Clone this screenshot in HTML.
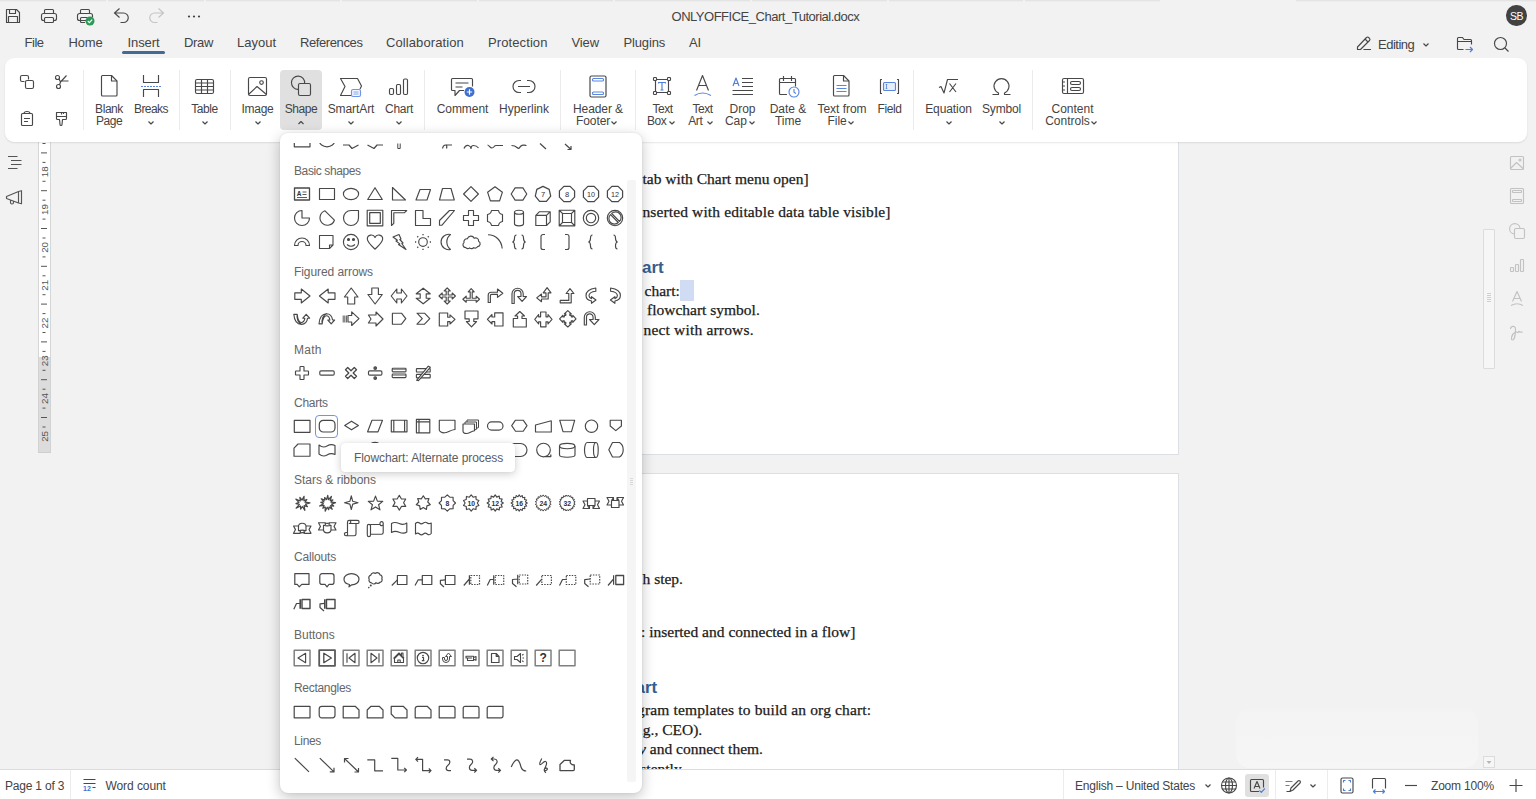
<!DOCTYPE html>
<html><head><meta charset="utf-8">
<title>ONLYOFFICE</title>
<style>
*{box-sizing:border-box;margin:0;padding:0}
html,body{width:1536px;height:799px;overflow:hidden;background:#f2f2f2;font-family:"Liberation Sans",sans-serif;color:#444;}
.abs{position:absolute}
svg{position:absolute;overflow:visible}
.ic{fill:none;stroke:#484848;stroke-width:1.15;stroke-linejoin:round;stroke-linecap:butt}
.t{position:absolute;white-space:nowrap;line-height:1}
.tab{position:absolute;top:36px;font-size:13px;line-height:14px;color:#444;white-space:nowrap;letter-spacing:-0.15px}
.lbl{position:absolute;font-size:12px;line-height:12px;color:#444;text-align:center;white-space:nowrap;letter-spacing:-0.45px;transform:translateX(-50%)}
.sep{position:absolute;top:70px;width:1px;height:60px;background:#ebebeb}
.doc{position:absolute;margin-top:0.9px;font-family:"Liberation Serif",serif;font-size:15.5px;color:#1a1a1a;white-space:nowrap;line-height:20px;-webkit-text-stroke:0.25px #1a1a1a}
.h2{position:absolute;margin-top:2.2px;font-family:"Liberation Sans",sans-serif;font-weight:bold;font-size:17px;color:#365f91;white-space:nowrap;line-height:20px}
.sec{position:absolute;left:294px;font-size:12px;line-height:14px;color:#666;white-space:nowrap;letter-spacing:-0.15px}
.sb{position:absolute;font-size:12px;line-height:14px;color:#444;white-space:nowrap;letter-spacing:-0.2px}
</style></head><body>
<!-- left sidebar icons -->
<svg style="left:5px;top:152px" width="20" height="20" viewBox="0 0 20 20"><g class="ic"><path d="M3 4.5h9.5M6 8.5h10.5M6 12.5h10.5M3 16.5h9.5" stroke="#555"/></g></svg>
<svg style="left:4px;top:187px" width="20" height="20" viewBox="0 0 20 20"><g class="ic" style="stroke:#555"><path d="M2.5 9.5L14.5 4.5v11.5l-12-4.5zM14.5 4.5l3-.8v13l-3-.7M6.5 13v2.5a1.5 1.5 0 0 0 3 0v-1.3"/></g></svg>

<!-- vertical ruler -->
<div class="abs" style="left:38px;top:142px;width:13px;height:311px;background:#fff;border-left:1px solid #d6d6d6;border-right:1px solid #d6d6d6"></div>
<div class="abs" style="left:38px;top:357px;width:13px;height:96px;background:#dcdcdc;border-left:1px solid #d2d2d2;border-right:1px solid #d2d2d2;border-bottom:1px solid #cfcfcf"></div>
<svg style="left:38px;top:142px" width="14" height="311" viewBox="0 0 14 311">
<g stroke="#555" stroke-width="1" fill="none">
<path d="M3 10.9h6M3 48.7h6M3 86.5h6M3 124.3h6M3 162.1h6M3 199.9h6M3 237.7h6M3 275.5h6"/>
<path d="M4.5 1.5h3M4.5 20.4h3M4.5 39.3h3M4.5 58.2h3M4.5 77.1h3M4.5 96h3M4.5 114.9h3M4.5 133.8h3M4.5 152.7h3M4.5 171.6h3M4.5 190.5h3M4.5 209.4h3M4.5 228.3h3M4.5 247.2h3M4.5 266.1h3M4.5 285h3"/>
</g>
<g font-family="Liberation Sans, sans-serif" font-size="9.8" fill="#555" text-anchor="middle">
<text transform="translate(9.9 29.8) rotate(-90)">18</text>
<text transform="translate(9.9 67.6) rotate(-90)">19</text>
<text transform="translate(9.9 105.4) rotate(-90)">20</text>
<text transform="translate(9.9 143.2) rotate(-90)">21</text>
<text transform="translate(9.9 181) rotate(-90)">22</text>
<text transform="translate(9.9 218.8) rotate(-90)">23</text>
<text transform="translate(9.9 256.6) rotate(-90)">24</text>
<text transform="translate(9.9 294.4) rotate(-90)">25</text>
</g></svg>

<!-- page 1 -->
<div class="abs" style="left:362px;top:100px;width:817px;height:355px;background:#fff;border:1px solid #dcdfe3"></div>
<!-- page 2 -->
<div class="abs" style="left:362px;top:473px;width:817px;height:330px;background:#fff;border:1px solid #dcdfe3"></div>

<div class="doc" style="left:642.5px;top:168px">tab with Chart menu open]</div>
<div class="doc" style="left:642.5px;top:201px;letter-spacing:0.12px">nserted with editable data table visible]</div>
<div class="h2" style="left:642px;top:256px">art</div>
<div class="abs" style="left:680px;top:280px;width:14px;height:20.5px;background:#d0dcf3"></div>
<div class="doc" style="left:644.5px;top:280px">chart:</div>
<div class="doc" style="left:647px;top:299px">flowchart symbol.</div>
<div class="doc" style="left:643.5px;top:318.7px;letter-spacing:0.18px">nect with arrows.</div>

<div class="doc" style="left:642.5px;top:567.7px">h step.</div>
<div class="doc" style="left:641px;top:621.3px">: inserted and connected in a flow]</div>
<div class="h2" style="left:635.5px;top:675.5px">art</div>
<div class="doc" style="left:637px;top:699.3px;letter-spacing:0.15px">gram templates to build an org chart:</div>
<div class="doc" style="left:632px;top:719px">e.g., CEO).</div>
<div class="doc" style="left:639px;top:738.3px"><i>y</i> and connect them.</div>
<div class="doc" style="left:636px;top:758px">istently.</div>

<!-- right sidebar icons (disabled) -->
<svg style="left:1507px;top:153px" width="20" height="20" viewBox="0 0 20 20"><g class="ic" style="stroke:#c2c2c2"><rect x="3.5" y="3.5" width="13" height="13" rx="1"/><circle cx="13" cy="7" r="1"/><path d="M3.5 15.5l6-6 7 6.5"/></g></svg>
<svg style="left:1507px;top:186px" width="20" height="20" viewBox="0 0 20 20"><g class="ic" style="stroke:#c2c2c2"><rect x="3.5" y="2.5" width="13" height="15" rx="1"/><rect x="5.5" y="4.5" width="9" height="2" rx=".5"/><rect x="5.5" y="13.5" width="9" height="2" rx=".5"/></g></svg>
<svg style="left:1507px;top:221px" width="20" height="20" viewBox="0 0 20 20"><g class="ic" style="stroke:#c2c2c2"><path d="M7.5 13A5.2 5.2 0 1 1 13 7.5"/><rect x="7.5" y="7.5" width="10" height="10" rx="1.5"/></g></svg>
<svg style="left:1507px;top:255px" width="20" height="20" viewBox="0 0 20 20"><g class="ic" style="stroke:#c2c2c2"><rect x="3.5" y="12.5" width="3" height="4" rx=".8"/><rect x="8.5" y="9.5" width="3" height="7" rx=".8"/><rect x="13.5" y="4.5" width="3" height="12" rx=".8"/></g></svg>
<svg style="left:1507px;top:288px" width="20" height="20" viewBox="0 0 20 20"><g class="ic" style="stroke:#c2c2c2"><path d="M5.5 13.5L10 3.5l4.5 10M7 10.5h6M4 17.5q6-3.5 12 0"/></g></svg>
<svg style="left:1507px;top:322px" width="20" height="20" viewBox="0 0 20 20"><g class="ic" style="stroke:#c2c2c2"><path d="M3.5 7c0-3 5-4 5 0 0 5-1 11-3 11s-1-6 3-8c2-1 2 2 3 0s1 1 2 0 1 1 2 0"/></g></svg>

<!-- vertical scrollbar -->
<div class="abs" style="left:1483px;top:229px;width:12px;height:140px;background:#f6f6f6;border:1px solid #dcdcdc;border-radius:1px"></div>
<div class="abs" style="left:1487px;top:293px;width:4px;height:1px;background:#cfcfcf;box-shadow:0 2px 0 #cfcfcf,0 4px 0 #cfcfcf,0 6px 0 #cfcfcf,0 8px 0 #cfcfcf"></div>
<div class="abs" style="left:1483px;top:756px;width:12px;height:12px;background:#f6f6f6;border:1px solid #dcdcdc"></div>
<svg style="left:1483px;top:756px" width="12" height="12" viewBox="0 0 12 12"><path d="M3.5 5h5L6 8z" fill="#b5b5b5"/></svg>

<!-- ghost toast --><div class="abs" style="left:1236px;top:708px;width:242px;height:60px;border-radius:14px;background:linear-gradient(rgba(255,255,255,.10),rgba(255,255,255,.30))"></div>
<!-- status bar -->
<div class="abs" style="left:0;top:769px;width:1536px;height:30px;background:#fff;border-top:1px solid #dcdcdc"></div>
<div class="sb" style="left:5px;top:778.7px">Page 1 of 3</div>
<div class="abs" style="left:70px;top:770px;width:1px;height:29px;background:#ececec"></div>
<svg style="left:80px;top:775px" width="20" height="20" viewBox="0 0 20 20"><g class="ic"><path d="M3.5 4.5h12M3.5 8.5h12M12.5 12.5h3"/></g><text x="3" y="16" font-family="Liberation Sans, sans-serif" font-size="7" fill="#3f6fd1" font-weight="bold">12</text></svg>
<div class="sb" style="left:105.5px;top:778.7px;letter-spacing:-0.08px">Word count</div>

<div class="abs" style="left:1063px;top:770px;width:1px;height:29px;background:#ececec"></div>
<div class="sb" style="left:1075px;top:779px">English – United States</div>
<svg style="left:1203px;top:781px" width="10" height="10" viewBox="0 0 10 10"><path class="ic" d="M2.5 3.5L5 6l2.5-2.5"/></svg>
<svg style="left:1219px;top:775px" width="20" height="20" viewBox="0 0 20 20"><g class="ic"><circle cx="10" cy="10.5" r="7.5"/><ellipse cx="10" cy="10.5" rx="3.5" ry="7.5"/><path d="M2.5 10.5h15M3.5 7h13M3.5 14h13M10 3v15"/></g></svg>
<div class="abs" style="left:1245px;top:774px;width:24px;height:23px;border-radius:3px;background:#e0e0e0"></div>
<svg style="left:1247px;top:775px" width="20" height="20" viewBox="0 0 20 20"><g class="ic"><path d="M12 16.5H4.5a1 1 0 0 1-1-1V5.5a1 1 0 0 1 1-1h11a1 1 0 0 1 1 1v7"/><path d="M7 13.5l3-7 3 7M8 11.5h4"/><path d="M12.5 15.5l1.8 1.8 3.5-3.8" stroke="#4f7fd6"/></g></svg>
<div class="abs" style="left:1275px;top:770px;width:1px;height:29px;background:#ececec"></div>
<svg style="left:1283px;top:775px" width="20" height="20" viewBox="0 0 20 20"><g class="ic"><path d="M2.5 6.5h7M2.5 10.5h4" stroke="#4f7fd6"/><path d="M7 16.5l1-3.5 7-7a1.4 1.4 0 0 1 2 2l-7 7zM3.5 16.5h3.5"/></g></svg>
<svg style="left:1308px;top:781px" width="10" height="10" viewBox="0 0 10 10"><path class="ic" d="M2.5 3.5L5 6l2.5-2.5"/></svg>
<div class="abs" style="left:1327px;top:770px;width:1px;height:29px;background:#ececec"></div>
<svg style="left:1337px;top:775px" width="20" height="20" viewBox="0 0 20 20"><g class="ic"><rect x="4" y="3" width="12" height="15" rx="1.5"/><path d="M6.5 7.5v-2h2M13.5 7.5v-2h-2M6.5 13.5v2h2M13.5 13.5v2h-2" stroke="#4f7fd6"/></g></svg>
<svg style="left:1369px;top:775px" width="20" height="20" viewBox="0 0 20 20"><g class="ic"><path d="M3.5 13.5v-9a1 1 0 0 1 1-1h11a1 1 0 0 1 1 1v9"/><path d="M4.5 16.5h11M6.5 14.5l-2 2 2 2M13.5 14.5l2 2-2 2" stroke="#4f7fd6"/></g></svg>
<svg style="left:1401px;top:775px" width="20" height="20" viewBox="0 0 20 20"><path class="ic" d="M4 10.5h12"/></svg>
<div class="sb" style="left:1431px;top:779px">Zoom 100%</div>
<svg style="left:1506px;top:775px" width="20" height="20" viewBox="0 0 20 20"><path class="ic" d="M3.5 10.5h13M10 4v13"/></svg>
<!-- top faint line -->
<div class="abs" style="left:0;top:0;width:1536px;height:1px;background:#e4e4e4"></div>
<div class="abs" style="left:0;top:1px;width:1536px;height:1px;background:#ededed"></div>
<div class="abs" style="left:106px;top:0;width:2px;height:2px;background:#f2f2f2"></div>
<div class="abs" style="left:204px;top:0;width:2px;height:2px;background:#f2f2f2"></div>
<div class="abs" style="left:340px;top:0;width:2px;height:2px;background:#f2f2f2"></div>
<div class="abs" style="left:477px;top:0;width:2px;height:2px;background:#f2f2f2"></div>
<div class="abs" style="left:613px;top:0;width:2px;height:2px;background:#f2f2f2"></div>
<div class="abs" style="left:750px;top:0;width:2px;height:2px;background:#f2f2f2"></div>
<div class="abs" style="left:887px;top:0;width:2px;height:2px;background:#f2f2f2"></div>
<div class="abs" style="left:1023px;top:0;width:2px;height:2px;background:#f2f2f2"></div>
<div class="abs" style="left:1160px;top:0;width:136px;height:2px;background:#f2f2f2"></div>

<!-- quick access icons -->
<svg style="left:3px;top:6px" width="20" height="20" viewBox="0 0 20 20"><g class="ic"><path d="M3.5 3.5h10l3 3v10h-13z" stroke-linejoin="round"/><path d="M6.5 3.5v4h6v-4M5.5 16.5v-6h9v6"/></g></svg>
<svg style="left:39px;top:6px" width="20" height="20" viewBox="0 0 20 20"><g class="ic"><path d="M5.5 7.5v-3a1 1 0 0 1 1-1h7a1 1 0 0 1 1 1v3"/><rect x="2.5" y="7.5" width="15" height="7" rx="2"/><rect x="5.5" y="11.5" width="9" height="5" rx="1" fill="#f2f2f2"/></g></svg>
<svg style="left:75px;top:6px" width="20" height="20" viewBox="0 0 20 20"><g class="ic"><path d="M5.5 7.5v-3a1 1 0 0 1 1-1h7a1 1 0 0 1 1 1v3"/><path d="M11 14.5H4.5a2 2 0 0 1-2-2v-3a2 2 0 0 1 2-2h11a2 2 0 0 1 2 2v2"/><path d="M10 16.5H6.5a1 1 0 0 1-1-1v-3a1 1 0 0 1 1-1h6"/></g><circle cx="15" cy="15" r="4.5" fill="#2a9a55"/><path d="M12.8 15l1.6 1.6 2.8-2.9" fill="none" stroke="#fff" stroke-width="1.2"/></svg>
<svg style="left:111px;top:6px" width="20" height="20" viewBox="0 0 20 20"><g class="ic"><path d="M8.5 2.5l-5 4.5 5 4.5M4 7h8.5a4.5 4.5 0 0 1 0 9.5H9.5" stroke-linejoin="miter"/></g></svg>
<svg style="left:147px;top:6px" width="20" height="20" viewBox="0 0 20 20"><g class="ic" style="stroke:#c4c4c4"><path d="M11.5 2.5l5 4.5-5 4.5M16 7H7.5a4.5 4.5 0 0 0 0 9.5h3" stroke-linejoin="miter"/></g></svg>
<svg style="left:184px;top:6px" width="20" height="20" viewBox="0 0 20 20"><g fill="#444"><circle cx="5" cy="10.5" r="1.1"/><circle cx="10" cy="10.5" r="1.1"/><circle cx="15" cy="10.5" r="1.1"/></g></svg>

<!-- title -->
<div class="t" style="left:671.5px;top:9px;font-size:13px;line-height:15px;color:#444;letter-spacing:-0.48px">ONLYOFFICE_Chart_Tutorial.docx</div>
<!-- avatar -->
<div class="abs" style="left:1506.2px;top:5.3px;width:20.4px;height:20.4px;border-radius:50%;background:#424242"></div>
<div class="t" style="left:1506px;top:10.5px;width:21px;text-align:center;font-size:10.5px;color:#fff;letter-spacing:-0.6px">SB</div>

<!-- tabs -->
<div class="tab" style="left:24.5px;letter-spacing:-0.45px">File</div>
<div class="tab" style="left:68.5px;letter-spacing:-0.15px">Home</div>
<div class="tab" style="left:127.5px;letter-spacing:-0.1px">Insert</div>
<div class="abs" style="left:122px;top:51px;width:43px;height:3px;border-radius:1.5px;background:#446995"></div>
<div class="tab" style="left:184px;letter-spacing:-0.35px">Draw</div>
<div class="tab" style="left:237px;letter-spacing:0px">Layout</div>
<div class="tab" style="left:300px;letter-spacing:-0.4px">References</div>
<div class="tab" style="left:386px;letter-spacing:0.1px">Collaboration</div>
<div class="tab" style="left:488px;letter-spacing:0.1px">Protection</div>
<div class="tab" style="left:571.5px;letter-spacing:-0.1px">View</div>
<div class="tab" style="left:623.5px;letter-spacing:-0.15px">Plugins</div>
<div class="tab" style="left:689px;letter-spacing:-0.15px">AI</div>

<!-- editing -->
<svg style="left:1354px;top:33px" width="20" height="20" viewBox="0 0 20 20"><g class="ic"><path d="M3.5 14L12.5 4.5a1.5 1.5 0 0 1 2.1 0l.9.9a1.5 1.5 0 0 1 0 2.1L6.5 16.5H3.5z"/><path d="M11 6l3 3M9.5 16.5h7.5"/></g></svg>
<div class="tab" style="left:1378px;top:38px;letter-spacing:-0.5px">Editing</div>
<svg style="left:1421px;top:40px" width="10" height="10" viewBox="0 0 10 10"><path class="ic" d="M2.5 3.5L5 6l2.5-2.5"/></svg>
<svg style="left:1455px;top:34px" width="20" height="20" viewBox="0 0 20 20"><g class="ic"><path d="M2.5 14.5v-10a1 1 0 0 1 1-1h4l1.5 2h6.5a1 1 0 0 1 1 1v4M2.5 7.5h14M2.5 14.5a1 1 0 0 0 1 1h5"/><path d="M10.5 15.5h7M15 13l2.5 2.5-2.5 2.5" stroke="#4f7fd6"/></g></svg>
<svg style="left:1491px;top:34px" width="20" height="20" viewBox="0 0 20 20"><g class="ic"><circle cx="9.5" cy="9.5" r="6"/><path d="M14 14l3.5 3.5"/></g></svg>
<!-- ribbon panel -->
<div class="abs" style="left:5px;top:58px;width:1522px;height:84px;background:#fff;border-radius:9px;box-shadow:0 1px 2px rgba(0,0,0,.10)"></div>
<!-- small icons -->
<svg style="left:17px;top:72px" width="20" height="20" viewBox="0 0 20 20"><g class="ic"><path d="M7.5 9.5H5a1.5 1.5 0 0 1-1.5-1.5V5A1.5 1.5 0 0 1 5 3.5h5A1.5 1.5 0 0 1 11.5 5v2.5"/><rect x="8.5" y="8.5" width="8" height="8" rx="1.5"/></g></svg>
<svg style="left:51px;top:72px" width="20" height="20" viewBox="0 0 20 20"><g class="ic"><circle cx="6.5" cy="5.5" r="2"/><circle cx="7.5" cy="14.5" r="2"/><path d="M8 7l1.5 3 6-6.5M9.5 10l-1 3M10.5 9h7"/></g></svg>
<svg style="left:17px;top:108.5px" width="20" height="20" viewBox="0 0 20 20"><g class="ic"><path d="M7 4.5H5.5a1 1 0 0 0-1 1v10a1 1 0 0 0 1 1h9a1 1 0 0 0 1-1v-10a1 1 0 0 0-1-1H13"/><path d="M7 4.5c0-1 1-2 3-2s3 1 3 2zM7 9.5h6M7 12.5h4"/></g></svg>
<svg style="left:51px;top:108.5px" width="20" height="20" viewBox="0 0 20 20"><g class="ic"><path d="M5.5 3.5h10v6a1 1 0 0 1-1 1h-3l-.5 5a1 1 0 0 1-2 0l-.5-5h-2a1 1 0 0 1-1-1z"/><path d="M5.5 7.5h10M10.5 3.5v2M12.5 3.5v1.5"/></g></svg>
<div class="sep" style="left:83px"></div>

<!-- Blank page -->
<svg style="left:97px;top:72px" width="24" height="28" viewBox="0 0 24 28"><g class="ic"><path d="M5.5 3.5h9l5.5 5.5v14a1 1 0 0 1-1 1h-13.5a1 1 0 0 1-1-1v-18.5a1 1 0 0 1 1-1z"/><path d="M14.5 3.5v5.5h5.5"/></g></svg>
<div class="lbl" style="left:109px;top:103px;letter-spacing:-0.45px">Blank<br>Page</div>
<!-- Breaks -->
<svg style="left:139px;top:72px" width="24" height="28" viewBox="0 0 24 28"><g class="ic"><path d="M4.5 3v7.5h15V3M4.5 25v-7.5h15V25"/><path d="M2 14.5h20" stroke="#5b86e0" stroke-dasharray="2 1"/></g></svg>
<div class="lbl" style="left:151px;top:103px;letter-spacing:-0.55px">Breaks</div>
<svg style="left:146px;top:118.3px" width="10" height="10" viewBox="0 0 10 10"><path class="ic" d="M2.5 3.5L5 6l2.5-2.5"/></svg>
<div class="sep" style="left:179px"></div>
<!-- Table -->
<svg style="left:192px;top:72px" width="24" height="28" viewBox="0 0 24 28"><g class="ic"><rect x="3.5" y="7.5" width="18" height="14" rx="1.5"/><path d="M3.5 11h18M3.5 14.5h18M3.5 18h18M9.5 7.5v14M15.5 7.5v14"/></g></svg>
<div class="lbl" style="left:204.5px;top:103px;letter-spacing:-0.45px">Table</div>
<svg style="left:199.5px;top:118.3px" width="10" height="10" viewBox="0 0 10 10"><path class="ic" d="M2.5 3.5L5 6l2.5-2.5"/></svg>
<div class="sep" style="left:230px"></div>
<!-- Image -->
<svg style="left:245px;top:72px" width="24" height="28" viewBox="0 0 24 28"><g class="ic"><rect x="3.5" y="5.5" width="18" height="18" rx="1.5"/><circle cx="16.5" cy="10.5" r="1.8"/><path d="M3.5 22.5l8.5-8 9.5 8"/></g></svg>
<div class="lbl" style="left:257.5px;top:103px;letter-spacing:-0.25px">Image</div>
<svg style="left:252.5px;top:118.3px" width="10" height="10" viewBox="0 0 10 10"><path class="ic" d="M2.5 3.5L5 6l2.5-2.5"/></svg>
<!-- Shape (pressed) -->
<div class="abs" style="left:280px;top:70px;width:42px;height:60px;border-radius:4px;background:#e0e0e0"></div>
<svg style="left:289px;top:72px" width="24" height="28" viewBox="0 0 24 28"><g class="ic"><path d="M9.5 17.3A6.6 6.6 0 1 1 15.6 11.5"/><rect x="9.5" y="11.5" width="12" height="12" rx="1.5"/></g></svg>
<div class="lbl" style="left:301px;top:103px;letter-spacing:-0.48px">Shape</div>
<svg style="left:296px;top:118.3px" width="10" height="10" viewBox="0 0 10 10"><path class="ic" d="M2.5 6L5 3.5 7.5 6"/></svg>
<!-- SmartArt -->
<svg style="left:338px;top:72px" width="26" height="28" viewBox="0 0 26 28"><g class="ic"><path d="M14 23.5H2.5L7 14.5 2.5 6.5h17l4 7.5-1.5 3"/><rect x="13.5" y="17.5" width="9" height="7" rx="1.5" stroke="#6f95e6" fill="#f1f5fe"/><path d="M15.5 20h5M15.5 22h5" stroke="#6f95e6" stroke-width=".8"/></g></svg>
<div class="lbl" style="left:351px;top:103px;letter-spacing:-0.08px">SmartArt</div>
<svg style="left:345.5px;top:118.3px" width="10" height="10" viewBox="0 0 10 10"><path class="ic" d="M2.5 3.5L5 6l2.5-2.5"/></svg>
<!-- Chart -->
<svg style="left:386px;top:72px" width="24" height="28" viewBox="0 0 24 28"><g class="ic"><rect x="3.5" y="16.5" width="4" height="6" rx="1.2"/><rect x="10.5" y="12.5" width="4" height="10" rx="1.2"/><rect x="17.5" y="7" width="4" height="15.5" rx="1.2"/></g></svg>
<div class="lbl" style="left:399px;top:103px;letter-spacing:-0.3px">Chart</div>
<svg style="left:393.5px;top:118.3px" width="10" height="10" viewBox="0 0 10 10"><path class="ic" d="M2.5 3.5L5 6l2.5-2.5"/></svg>
<div class="sep" style="left:424px"></div>
<!-- Comment -->
<svg style="left:449px;top:72px" width="28" height="28" viewBox="0 0 28 28"><g class="ic"><path d="M15 18.5H10.5l-4.5 5v-5H3.5a1 1 0 0 1-1-1V7.5a1 1 0 0 1 1-1h19a1 1 0 0 1 1 1v7"/><path d="M6.5 11h13M6.5 15h7"/></g><circle cx="20.5" cy="20" r="5" fill="#3f6fd1"/><path d="M17.8 20h5.4M20.5 17.3v5.4" stroke="#fff" stroke-width="1.2" fill="none"/></svg>
<div class="lbl" style="left:462.5px;top:103px;letter-spacing:-0.04px">Comment</div>
<!-- Hyperlink -->
<svg style="left:511px;top:72px" width="26" height="28" viewBox="0 0 26 28"><g class="ic"><path d="M10 8.5H8a6 6 0 0 0 0 12h2M16 8.5h2a6 6 0 0 1 0 12h-2M7 14.5h12"/></g></svg>
<div class="lbl" style="left:524px;top:103px;letter-spacing:0px">Hyperlink</div>
<div class="sep" style="left:560px"></div>
<!-- Header & Footer -->
<svg style="left:586px;top:72px" width="24" height="28" viewBox="0 0 24 28"><g class="ic"><rect x="4" y="4" width="16" height="21" rx="1.5" stroke-width="1.2"/><rect x="6.5" y="6.5" width="11" height="2.5" rx="1" stroke="#5b86e0"/><rect x="6.5" y="20" width="11" height="2.5" rx="1" stroke="#5b86e0"/></g></svg>
<div class="lbl" style="left:598px;top:103px;letter-spacing:-0.08px">Header &amp;<br>Footer&nbsp;&nbsp;&nbsp;</div>
<svg style="left:609px;top:117.5px" width="10" height="10" viewBox="0 0 10 10"><path class="ic" d="M2.5 3.5L5 6l2.5-2.5"/></svg>
<div class="sep" style="left:635px"></div>
<!-- Text Box -->
<svg style="left:650px;top:72px" width="24" height="28" viewBox="0 0 24 28"><g class="ic"><rect x="5.5" y="7.5" width="13" height="13"/><rect x="3.5" y="5.5" width="3" height="3" rx=".8" fill="#fff"/><rect x="17.5" y="5.5" width="3" height="3" rx=".8" fill="#fff"/><rect x="3.5" y="19.5" width="3" height="3" rx=".8" fill="#fff"/><rect x="17.5" y="19.5" width="3" height="3" rx=".8" fill="#fff"/><path d="M8.5 11.5v-1h7v1M12 10.5v7.5M10.5 18h3" stroke="#4f7fd6"/></g></svg>
<div class="lbl" style="left:662.5px;top:103px;letter-spacing:-0.45px">Text<br>Box&nbsp;&nbsp;&nbsp;&nbsp;</div>
<svg style="left:667px;top:117.5px" width="10" height="10" viewBox="0 0 10 10"><path class="ic" d="M2.5 3.5L5 6l2.5-2.5"/></svg>
<!-- Text Art -->
<svg style="left:690px;top:72px" width="24" height="28" viewBox="0 0 24 28"><g class="ic"><path d="M6.5 18.5L12.5 3.5l6 15M8.5 13.5h8"/><path d="M4.5 23.5q8-5 16.5 0" stroke="#5b86e0"/></g></svg>
<div class="lbl" style="left:702.5px;top:103px;letter-spacing:-0.45px">Text<br>Art&nbsp;&nbsp;&nbsp;&nbsp;&nbsp;</div>
<svg style="left:705px;top:117.5px" width="10" height="10" viewBox="0 0 10 10"><path class="ic" d="M2.5 3.5L5 6l2.5-2.5"/></svg>
<!-- Drop Cap -->
<svg style="left:730px;top:72px" width="26" height="28" viewBox="0 0 26 28"><g class="ic"><path d="M3 14l3-8 3 8M4 11.5h4" stroke="#4f7fd6"/><path d="M12 6.5h11M12 10.5h11M12 14.5h11M2.5 18.5h20.5M2.5 22.5h20.5"/></g></svg>
<div class="lbl" style="left:742.5px;top:103px;letter-spacing:-0.05px">Drop<br>Cap&nbsp;&nbsp;&nbsp;&nbsp;</div>
<svg style="left:747px;top:117.5px" width="10" height="10" viewBox="0 0 10 10"><path class="ic" d="M2.5 3.5L5 6l2.5-2.5"/></svg>
<!-- Date & Time -->
<svg style="left:776px;top:72px" width="26" height="28" viewBox="0 0 26 28"><g class="ic"><path d="M11 22.5H4.5a1 1 0 0 1-1-1V7.5a1 1 0 0 1 1-1h14a1 1 0 0 1 1 1v7M3.5 10.5h16M7.5 4v5M15.5 4v5"/><circle cx="18" cy="20" r="5" stroke="#5b86e0"/><path d="M18 17v3.2l2 1.3" stroke="#5b86e0"/></g></svg>
<div class="lbl" style="left:788px;top:103px;letter-spacing:0px">Date &amp;<br>Time</div>
<!-- Text from file -->
<svg style="left:830px;top:72px" width="24" height="28" viewBox="0 0 24 28"><g class="ic"><path d="M4.5 3.5h9l5.5 5.5v14a1 1 0 0 1-1 1h-13.5a1 1 0 0 1-1-1v-18.5a1 1 0 0 1 1-1z"/><path d="M13.5 3.5v5.5h5.5"/><path d="M6.5 13.5h10M6.5 16.5h10M6.5 19.5h10" stroke="#5b86e0"/></g></svg>
<div class="lbl" style="left:842px;top:103px;letter-spacing:-0.04px">Text from<br>File&nbsp;&nbsp;&nbsp;</div>
<svg style="left:846px;top:117.5px" width="10" height="10" viewBox="0 0 10 10"><path class="ic" d="M2.5 3.5L5 6l2.5-2.5"/></svg>
<!-- Field -->
<svg style="left:877px;top:72px" width="26" height="28" viewBox="0 0 26 28"><g class="ic"><path d="M5 7.5H3.5v14H5M20 7.5h1.5v14H20"/><rect x="6.5" y="10.5" width="12" height="8" rx="1" stroke="#5b86e0" fill="#e6edfb"/><path d="M9.5 12.5v4M8.7 12.5h1.6M8.7 16.5h1.6" stroke="#4f7fd6" stroke-width=".8"/></g></svg>
<div class="lbl" style="left:889.5px;top:103px;letter-spacing:-0.4px">Field</div>
<div class="sep" style="left:913px"></div>
<!-- Equation -->
<svg style="left:936px;top:72px" width="26" height="28" viewBox="0 0 26 28"><g class="ic"><path d="M3 15.5l2-1 3 6.5 3.5-13.5h10.5M13.5 11.5l6.5 8.5M20 11.5l-6.5 8.5"/></g></svg>
<div class="lbl" style="left:948.5px;top:103px;letter-spacing:-0.1px">Equation</div>
<svg style="left:943.5px;top:118.3px" width="10" height="10" viewBox="0 0 10 10"><path class="ic" d="M2.5 3.5L5 6l2.5-2.5"/></svg>
<!-- Symbol -->
<svg style="left:989px;top:72px" width="26" height="28" viewBox="0 0 26 28"><g class="ic"><path d="M3.5 22.5h6v-1.5a7.5 7.5 0 1 1 6 0v1.5h6"/></g></svg>
<div class="lbl" style="left:1001.5px;top:103px;letter-spacing:-0.17px">Symbol</div>
<svg style="left:996.5px;top:118.3px" width="10" height="10" viewBox="0 0 10 10"><path class="ic" d="M2.5 3.5L5 6l2.5-2.5"/></svg>
<div class="sep" style="left:1032px"></div>
<!-- Content controls -->
<svg style="left:1059px;top:72px" width="28" height="28" viewBox="0 0 28 28"><g class="ic"><rect x="3.5" y="6.5" width="21" height="15" rx="1.5"/><path d="M8.5 6.5v15M3.5 10h2.5M3.5 14h2.5M3.5 18h2.5"/><rect x="11.5" y="9.5" width="10" height="3" rx="1.5"/><rect x="11.5" y="15.5" width="10" height="3" rx="1.5"/></g></svg>
<div class="lbl" style="left:1072.5px;top:103px;letter-spacing:0px">Content<br>Controls&nbsp;&nbsp;&nbsp;</div>
<svg style="left:1089px;top:117.5px" width="10" height="10" viewBox="0 0 10 10"><path class="ic" d="M2.5 3.5L5 6l2.5-2.5"/></svg>
<!-- dropdown panel -->
<div class="abs" style="left:280px;top:133px;width:362px;height:659.5px;background:#fff;border-radius:8px;box-shadow:0 4px 14px rgba(0,0,0,.24),0 0 2px rgba(0,0,0,.10)"></div>
<div class="abs" style="left:627px;top:180px;width:9px;height:602px;background:#f5f5f5;border-radius:2px"></div>
<div class="abs" style="left:630px;top:478px;width:3px;height:1px;background:#d8d8d8;box-shadow:0 2px 0 #d8d8d8,0 4px 0 #d8d8d8,0 6px 0 #d8d8d8"></div>
<div class="sec" style="top:164px;letter-spacing:-0.4px">Basic shapes</div>
<div class="sec" style="top:265px;letter-spacing:-0.07px">Figured arrows</div>
<div class="sec" style="top:343px;letter-spacing:0.27px">Math</div>
<div class="sec" style="top:396px;letter-spacing:-0.25px">Charts</div>
<div class="sec" style="top:473px;letter-spacing:0px">Stars &amp; ribbons</div>
<div class="sec" style="top:550px;letter-spacing:-0.15px">Callouts</div>
<div class="sec" style="top:628px;letter-spacing:0px">Buttons</div>
<div class="sec" style="top:681px;letter-spacing:-0.3px">Rectangles</div>
<div class="sec" style="top:734px;letter-spacing:-0.35px">Lines</div>
<!-- selected item -->
<div class="abs" style="left:315px;top:415px;width:23px;height:23px;border:1px solid #6e96e6;border-radius:4px"></div>
<div class="abs" style="left:285px;top:143px;width:340px;height:7px;overflow:hidden"><svg class="si" style="left:7.45px;top:-12px" width="20" height="20" viewBox="0 0 20 20"><g class="ic"><path d="M2.3 4.3H18V15.8H2.3z" stroke-width="1.2"/></g></svg>
<svg class="si" style="left:31.52px;top:-12px" width="20" height="20" viewBox="0 0 20 20"><g class="ic"><ellipse cx="10" cy="10" rx="7.6" ry="5.8" stroke-width="1.2"/></g></svg>
<svg class="si" style="left:55.59px;top:-12px" width="20" height="20" viewBox="0 0 20 20"><g class="ic"><path d="M2 14H8L11 17.5 17.5 14" stroke-width="1.2"/></g></svg>
<svg class="si" style="left:79.66px;top:-12px" width="20" height="20" viewBox="0 0 20 20"><g class="ic"><path d="M18 14H12L9 17.5 2.5 14" stroke-width="1.2"/></g></svg>
<svg class="si" style="left:103.73px;top:-12px" width="20" height="20" viewBox="0 0 20 20"><g class="ic"><path d="M8.8 12.5V17.5H11.2V12.5" stroke-width="1"/></g></svg>
<svg class="si" style="left:151.87px;top:-12px" width="20" height="20" viewBox="0 0 20 20"><g class="ic"><path d="M5.5 17.5C6 15 7 14 8.5 14S10 15.5 9.5 17.5M9 14H15" stroke-width="1.2"/></g></svg>
<svg class="si" style="left:175.94px;top:-12px" width="20" height="20" viewBox="0 0 20 20"><g class="ic"><path d="M3 17.5C4 15 6 14 7.5 14.5S10 16 10 17.5C10 16 11 14.5 12.5 14.5S16 15 17.5 17" stroke-width="1.2"/></g></svg>
<svg class="si" style="left:200.01px;top:-12px" width="20" height="20" viewBox="0 0 20 20"><g class="ic"><path d="M2.5 14C4 14 5 17 7 17S9 14.5 11 14.5H18" stroke-width="1.2"/></g></svg>
<svg class="si" style="left:224.08px;top:-12px" width="20" height="20" viewBox="0 0 20 20"><g class="ic"><path d="M2.5 14.5C4 14.5 6 14.5 8 16.5S10 17 12 15 15 14.5 17.5 14.5" stroke-width="1.2"/></g></svg>
<svg class="si" style="left:248.15px;top:-12px" width="20" height="20" viewBox="0 0 20 20"><g class="ic"><path d="M7 12.5L13 18" stroke-width="1.2"/></g></svg>
<svg class="si" style="left:272.22px;top:-12px" width="20" height="20" viewBox="0 0 20 20"><g class="ic"><path d="M8 13L14 18.5M10.5 18.5H14V15" stroke-width="1.2"/></g></svg>
</div><svg class="si" style="left:292.45px;top:184px" width="20" height="20" viewBox="0 0 20 20"><g class="ic"><path d="M2.5 4h15v12h-15z" stroke-width="1.3"/><text x="7" y="12.2" font-family="Liberation Sans, sans-serif" font-size="6.5" font-weight="bold" text-anchor="middle" fill="#303030" stroke="none">A</text><path d="M10.5 8h4M10.5 10.5h4M5 13.5h10" stroke-width="0.9"/></g></svg>
<svg class="si" style="left:316.52px;top:184px" width="20" height="20" viewBox="0 0 20 20"><g class="ic"><path d="M2.5 4.5h15v11h-15z" /></g></svg>
<svg class="si" style="left:340.59px;top:184px" width="20" height="20" viewBox="0 0 20 20"><g class="ic"><ellipse cx="10" cy="10" rx="7.6" ry="5.6"/></g></svg>
<svg class="si" style="left:364.66px;top:184px" width="20" height="20" viewBox="0 0 20 20"><g class="ic"><path d="M10 3.7L17.3 15.5H2.7z" /></g></svg>
<svg class="si" style="left:388.73px;top:184px" width="20" height="20" viewBox="0 0 20 20"><g class="ic"><path d="M3.5 3.5v12.5H16.5z" /></g></svg>
<svg class="si" style="left:412.8px;top:184px" width="20" height="20" viewBox="0 0 20 20"><g class="ic"><path d="M7 5.5h10.5L14 16H3z" /></g></svg>
<svg class="si" style="left:436.87px;top:184px" width="20" height="20" viewBox="0 0 20 20"><g class="ic"><path d="M5.5 4.5h8.5L17.3 16H2.5z" /></g></svg>
<svg class="si" style="left:460.94px;top:184px" width="20" height="20" viewBox="0 0 20 20"><g class="ic"><path d="M10 2.6L17.4 10 10 17.4 2.6 10z" /></g></svg>
<svg class="si" style="left:485.01px;top:184px" width="20" height="20" viewBox="0 0 20 20"><g class="ic"><path d="M10 2.8L17.42 8.19L14.58 16.91L5.42 16.91L2.58 8.19z" /></g></svg>
<svg class="si" style="left:509.08px;top:184px" width="20" height="20" viewBox="0 0 20 20"><g class="ic"><path d="M17.8 10L13.9 16.15L6.1 16.15L2.2 10L6.1 3.85L13.9 3.85z" /></g></svg>
<svg class="si" style="left:533.15px;top:184px" width="20" height="20" viewBox="0 0 20 20"><g class="ic"><path d="M10 2.4L16.18 5.37L17.7 12.06L13.43 17.42L6.57 17.42L2.3 12.06L3.82 5.37z" stroke-width="1.25"/><text x="10" y="12.9" font-family="Liberation Sans, sans-serif" font-size="7.5" font-weight="normal" text-anchor="middle" fill="#303030" stroke="none">7</text></g></svg>
<svg class="si" style="left:557.22px;top:184px" width="20" height="20" viewBox="0 0 20 20"><g class="ic"><path d="M17.58 13.14L13.14 17.58L6.86 17.58L2.42 13.14L2.42 6.86L6.86 2.42L13.14 2.42L17.58 6.86z" stroke-width="1.25"/><text x="10" y="12.8" font-family="Liberation Sans, sans-serif" font-size="7.5" font-weight="normal" text-anchor="middle" fill="#303030" stroke="none">8</text></g></svg>
<svg class="si" style="left:581.29px;top:184px" width="20" height="20" viewBox="0 0 20 20"><g class="ic"><path d="M17.58 13.14L13.14 17.58L6.86 17.58L2.42 13.14L2.42 6.86L6.86 2.42L13.14 2.42L17.58 6.86z" stroke-width="1.25"/><text x="10" y="12.7" font-family="Liberation Sans, sans-serif" font-size="7.2" font-weight="normal" text-anchor="middle" fill="#303030" stroke="none">10</text></g></svg>
<svg class="si" style="left:605.36px;top:184px" width="20" height="20" viewBox="0 0 20 20"><g class="ic"><path d="M17.58 13.14L13.14 17.58L6.86 17.58L2.42 13.14L2.42 6.86L6.86 2.42L13.14 2.42L17.58 6.86z" stroke-width="1.25"/><text x="10" y="12.7" font-family="Liberation Sans, sans-serif" font-size="7.2" font-weight="normal" text-anchor="middle" fill="#303030" stroke="none">12</text></g></svg>
<svg class="si" style="left:292.45px;top:208.2px" width="20" height="20" viewBox="0 0 20 20"><g class="ic"><path d="M10 2.5A7.5 7.5 0 1 0 17.5 10H10z" /></g></svg>
<svg class="si" style="left:316.52px;top:208.2px" width="20" height="20" viewBox="0 0 20 20"><g class="ic"><path d="M8 2.8A7.4 7.4 0 1 0 17.4 12.2z" /></g></svg>
<svg class="si" style="left:340.59px;top:208.2px" width="20" height="20" viewBox="0 0 20 20"><g class="ic"><path d="M17.5 2.5H10A7.5 7.5 0 1 0 17.5 10z" /></g></svg>
<svg class="si" style="left:364.66px;top:208.2px" width="20" height="20" viewBox="0 0 20 20"><g class="ic"><path d="M2.2 2.2h15.6v15.6H2.2z" /><path d="M4.7 4.7h10.6v10.6H4.7z" stroke-width="1.2"/></g></svg>
<svg class="si" style="left:388.73px;top:208.2px" width="20" height="20" viewBox="0 0 20 20"><g class="ic"><path d="M2.5 17.5V2.5h15.2l-2.2 2.2H4.8v10.6z" /></g></svg>
<svg class="si" style="left:412.8px;top:208.2px" width="20" height="20" viewBox="0 0 20 20"><g class="ic"><path d="M2.5 2.5h7.5v8h7.5v7h-15z" /></g></svg>
<svg class="si" style="left:436.87px;top:208.2px" width="20" height="20" viewBox="0 0 20 20"><g class="ic"><path d="M2.5 17.2V12.5L12.5 2.5h5L5 17.2z" /></g></svg>
<svg class="si" style="left:460.94px;top:208.2px" width="20" height="20" viewBox="0 0 20 20"><g class="ic"><path d="M7.5 2.5h5v5h5v5h-5v5h-5v-5h-5v-5h5z" /></g></svg>
<svg class="si" style="left:485.01px;top:208.2px" width="20" height="20" viewBox="0 0 20 20"><g class="ic"><path d="M6.5 2.5h7c.3 2 2 3.7 4 4v7c-2 .3-3.7 2-4 4h-7c-.3-2-2-3.7-4-4v-7c2-.3 3.7-2 4-4z" /></g></svg>
<svg class="si" style="left:509.08px;top:208.2px" width="20" height="20" viewBox="0 0 20 20"><g class="ic"><path d="M5.5 4.2v11.6c0 1.1 2 2 4.5 2s4.5-.9 4.5-2V4.2" /><ellipse cx="10" cy="4.2" rx="4.5" ry="2"/></g></svg>
<svg class="si" style="left:533.15px;top:208.2px" width="20" height="20" viewBox="0 0 20 20"><g class="ic"><path d="M2.8 7.3h10.7v10.2H2.8zM2.8 7.3l3.7-3.6h10.7l-3.7 3.6M17.2 3.7v10.2l-3.7 3.6" /></g></svg>
<svg class="si" style="left:557.22px;top:208.2px" width="20" height="20" viewBox="0 0 20 20"><g class="ic"><path d="M2.2 2.2h15.6v15.6H2.2zM5.5 5.5h9v9h-9zM2.2 2.2l3.3 3.3M17.8 2.2l-3.3 3.3M2.2 17.8l3.3-3.3M17.8 17.8l-3.3-3.3" /></g></svg>
<svg class="si" style="left:581.29px;top:208.2px" width="20" height="20" viewBox="0 0 20 20"><g class="ic"><circle cx="10" cy="10" r="7.7"/><circle cx="10" cy="10" r="4.7"/></g></svg>
<svg class="si" style="left:605.36px;top:208.2px" width="20" height="20" viewBox="0 0 20 20"><g class="ic"><circle cx="10" cy="10" r="7.7"/><path d="M6.7 5.5A5.5 5.5 0 0 1 14.5 13.3zM5.5 6.7A5.5 5.5 0 0 0 13.3 14.5z" /></g></svg>
<svg class="si" style="left:292.45px;top:232.2px" width="20" height="20" viewBox="0 0 20 20"><g class="ic"><path d="M2.5 13.5a7.5 7.5 0 0 1 15 0h-3.5a4 4 0 0 0-8 0z" /></g></svg>
<svg class="si" style="left:316.52px;top:232.2px" width="20" height="20" viewBox="0 0 20 20"><g class="ic"><path d="M2.5 3.5h13.5v9.5l-3.5 3.5H2.5zM16 13h-3.5v3.5" stroke-width="1.1"/></g></svg>
<svg class="si" style="left:340.59px;top:232.2px" width="20" height="20" viewBox="0 0 20 20"><g class="ic"><circle cx="10" cy="10" r="7.6"/><path d="M6 12.5q4 3.5 8 0" /><circle cx="7.5" cy="7.5" r="1" fill="#444"/><circle cx="12.5" cy="7.5" r="1" fill="#444"/></g></svg>
<svg class="si" style="left:364.66px;top:232.2px" width="20" height="20" viewBox="0 0 20 20"><g class="ic"><path d="M10 17.2C5 12.5 2.3 10 2.3 7a4 4 0 0 1 7.7-1.5A4 4 0 0 1 17.7 7c0 3-2.7 5.5-7.7 10.2z" /></g></svg>
<svg class="si" style="left:388.73px;top:232.2px" width="20" height="20" viewBox="0 0 20 20"><g class="ic"><path d="M4 5l6-2.5 2 4.5-1.2.5 3.2 3.5-1.2.5L17 17.5 9.5 12.5l1.3-.6L7 9l1.4-.7z" /></g></svg>
<svg class="si" style="left:412.8px;top:232.2px" width="20" height="20" viewBox="0 0 20 20"><g class="ic"><circle cx="10" cy="10" r="4.3"/><path d="M10 2v1.2M10 16.8V18M2 10h1.2M16.8 10H18M4.3 4.3l.9.9M14.8 14.8l.9.9M15.7 4.3l-.9.9M5.2 14.8l-.9.9" stroke-width="1.3"/></g></svg>
<svg class="si" style="left:436.87px;top:232.2px" width="20" height="20" viewBox="0 0 20 20"><g class="ic"><path d="M13.5 2.5A7.7 7.7 0 1 0 13.5 17.5 9.5 9.5 0 0 1 13.5 2.5z" /></g></svg>
<svg class="si" style="left:460.94px;top:232.2px" width="20" height="20" viewBox="0 0 20 20"><g class="ic"><path d="M4.8 15.6A2.8 2.8 0 0 1 3 10.6 3 3 0 0 1 6.3 6.8 3.7 3.7 0 0 1 13.2 6.2 3 3 0 0 1 17.6 9.3 2.8 2.8 0 0 1 16.6 14.6 2.5 2.5 0 0 1 12.8 15.6 3 3 0 0 1 8.5 15.9 2.5 2.5 0 0 1 4.8 15.6z" /></g></svg>
<svg class="si" style="left:485.01px;top:232.2px" width="20" height="20" viewBox="0 0 20 20"><g class="ic"><path d="M3 2.8C11 3 16.5 8.5 17.2 16.5" /></g></svg>
<svg class="si" style="left:509.08px;top:232.2px" width="20" height="20" viewBox="0 0 20 20"><g class="ic"><path d="M7.5 3c-2 0-2 1.5-2 3s0 3.5-1.8 4c1.8.5 1.8 2.5 1.8 4s0 3 2 3M12.5 3c2 0 2 1.5 2 3s0 3.5 1.8 4c-1.8.5-1.8 2.5-1.8 4s0 3-2 3" /></g></svg>
<svg class="si" style="left:533.15px;top:232.2px" width="20" height="20" viewBox="0 0 20 20"><g class="ic"><path d="M12 2.5H10A2 2 0 0 0 8 4.5v11a2 2 0 0 0 2 2h2" /></g></svg>
<svg class="si" style="left:557.22px;top:232.2px" width="20" height="20" viewBox="0 0 20 20"><g class="ic"><path d="M8 2.5h2a2 2 0 0 1 2 2v11a2 2 0 0 1-2 2H8" /></g></svg>
<svg class="si" style="left:581.29px;top:232.2px" width="20" height="20" viewBox="0 0 20 20"><g class="ic"><path d="M11.5 3c-2 0-2 1.5-2 3s0 3.5-1.8 4c1.8.5 1.8 2.5 1.8 4s0 3 2 3" /></g></svg>
<svg class="si" style="left:605.36px;top:232.2px" width="20" height="20" viewBox="0 0 20 20"><g class="ic"><path d="M8.5 3c2 0 2 1.5 2 3s0 3.5 1.8 4c-1.8.5-1.8 2.5-1.8 4s0 3 2 3" /></g></svg>
<svg class="si" style="left:292.45px;top:285.8px" width="20" height="20" viewBox="0 0 20 20"><g class="ic"><path d="M2.8 6.8H9.3V3L18 10 9.3 17V13.3H2.8z" /></g></svg>
<svg class="si" style="left:316.52px;top:285.8px" width="20" height="20" viewBox="0 0 20 20"><g class="ic"><path d="M18 6.8H11.2V3L2.4 10l8.8 7V13.3H18z" /></g></svg>
<svg class="si" style="left:340.59px;top:285.8px" width="20" height="20" viewBox="0 0 20 20"><g class="ic"><path d="M10.2 2L17 11H13.7V18H6.7V11H3.4z" /></g></svg>
<svg class="si" style="left:364.66px;top:285.8px" width="20" height="20" viewBox="0 0 20 20"><g class="ic"><path d="M6.8 2H13.4V8.5H17.3L10.1 18 2.9 8.5H6.8z" /></g></svg>
<svg class="si" style="left:388.73px;top:285.8px" width="20" height="20" viewBox="0 0 20 20"><g class="ic"><path d="M2.2 10L7.8 3V7H12.4V3L18 10l-5.6 7V13H7.8V17z" /></g></svg>
<svg class="si" style="left:412.8px;top:285.8px" width="20" height="20" viewBox="0 0 20 20"><g class="ic"><path d="M10.2 2.2L17.2 7.8H13.2V12.2H17.2L10.2 17.8 3.2 12.2H7.2V7.8H3.2z" /></g></svg>
<svg class="si" style="left:436.87px;top:285.8px" width="20" height="20" viewBox="0 0 20 20"><g class="ic"><path d="M10.2 1.8L13.2 5H11.2V9H15.2V7L18.4 10l-3.2 3V11H11.2V15H13.2L10.2 18.2 7.2 15H9.2V11H5.2V13L2 10l3.2-3V9H9.2V5H7.2z" /></g></svg>
<svg class="si" style="left:460.94px;top:285.8px" width="20" height="20" viewBox="0 0 20 20"><g class="ic"><path d="M10.2 2.6L13.2 5.8H11.2V12.2H15.2V10.2L18.5 13.2 15.2 16.2V14.2H5.2V16.2L1.9 13.2 5.2 10.2V12.2H9.2V5.8H7.2z" /></g></svg>
<svg class="si" style="left:485.01px;top:285.8px" width="20" height="20" viewBox="0 0 20 20"><g class="ic"><path d="M3.2 16.5V9.2Q3.2 6.2 6.2 6.2H12.5V3L17.8 7.3 12.5 11.4V8.4H6.6Q5.4 8.4 5.4 9.6V16.5z" /></g></svg>
<svg class="si" style="left:509.08px;top:285.8px" width="20" height="20" viewBox="0 0 20 20"><g class="ic"><path d="M3 17.5V7.8A5.6 5.6 0 0 1 14.2 7.8V10.5H17.5L13.1 15.4 8.7 10.5H12V7.8A3.4 3.4 0 0 0 5.2 7.8V17.5z" /></g></svg>
<svg class="si" style="left:533.15px;top:285.8px" width="20" height="20" viewBox="0 0 20 20"><g class="ic"><path d="M14.1 1.7L18 6.8H15.2V13H8.5V15.7L3.7 11.9 8.5 8V10.8H13V6.8H10.2z" /></g></svg>
<svg class="si" style="left:557.22px;top:285.8px" width="20" height="20" viewBox="0 0 20 20"><g class="ic"><path d="M13 2.6L16.9 7.5H14.2V16.8H3.2V14.4H11.8V7.5H9.1z" /></g></svg>
<svg class="si" style="left:581.29px;top:285.8px" width="20" height="20" viewBox="0 0 20 20"><g class="ic"><path d="M14.8 2C8 3 5 6 5 9.5c0 3 2.2 4.8 5.5 5.5V17.3L15 14 10.5 10.7V12.6C8.8 12 8 11 8 9.8 8 7.5 10 5.8 14.8 5.3z" /></g></svg>
<svg class="si" style="left:605.36px;top:285.8px" width="20" height="20" viewBox="0 0 20 20"><g class="ic"><path d="M5.6 2C12.4 3 15.4 6 15.4 9.5c0 3-2.2 4.8-5.5 5.5V17.3L5.4 14 9.9 10.7V12.6C11.6 12 12.4 11 12.4 9.8 12.4 7.5 10.4 5.8 5.6 5.3z" /></g></svg>
<svg class="si" style="left:292.45px;top:309.4px" width="20" height="20" viewBox="0 0 20 20"><g class="ic"><path d="M1.8 5.3H5.2C5.8 11 7.5 13.5 9.5 13.5c2 0 3-1.7 3.4-4.3H10.8L14.2 5.3 17.6 9.2H15.6C15 13 13 15.4 9.5 15.4 5 15.4 2.3 11.5 1.8 5.3zM5.2 5.3C4.5 9 6 14 9.5 15.4" /></g></svg>
<svg class="si" style="left:316.52px;top:309.4px" width="20" height="20" viewBox="0 0 20 20"><g class="ic"><path d="M2 14.8H5.2C5.8 9.5 7.5 6.7 9.5 6.7c2 0 3 1.7 3.4 4.3H10.8L14.2 14.9 17.6 11H15.6C15 7 13 4.7 9.5 4.7 5 4.7 2.5 8.5 2 14.8zM5.2 14.8C4.5 11 6 6 9.5 4.7" /></g></svg>
<svg class="si" style="left:340.59px;top:309.4px" width="20" height="20" viewBox="0 0 20 20"><g class="ic"><path d="M2.2 6.5v7M3.8 6.5v7M5.4 6.5v7" stroke-width="0.9"/><path d="M7 6.5H10.7V2.9L18 9.7 10.7 16.5V13H7z" /></g></svg>
<svg class="si" style="left:364.66px;top:309.4px" width="20" height="20" viewBox="0 0 20 20"><g class="ic"><path d="M3.4 6H11V3L18 10l-7 7V14H3.4L6 10z" /></g></svg>
<svg class="si" style="left:388.73px;top:309.4px" width="20" height="20" viewBox="0 0 20 20"><g class="ic"><path d="M3.4 4.2H12.5L16.8 9.7 12.5 15.2H3.4z" /></g></svg>
<svg class="si" style="left:412.8px;top:309.4px" width="20" height="20" viewBox="0 0 20 20"><g class="ic"><path d="M4 4.2H11.5L16.8 9.7 11.5 15.2H4L9.3 9.7z" /></g></svg>
<svg class="si" style="left:436.87px;top:309.4px" width="20" height="20" viewBox="0 0 20 20"><g class="ic"><path d="M2.3 4H10.7V8.2H13V5.8L18 10.4 13 15V12.6H10.7V17H2.3z" /></g></svg>
<svg class="si" style="left:460.94px;top:309.4px" width="20" height="20" viewBox="0 0 20 20"><g class="ic"><path d="M4 2H17V9.8H12.8V12.5H15.6L10.5 17.8 5.4 12.5H8.2V9.8H4z" /></g></svg>
<svg class="si" style="left:485.01px;top:309.4px" width="20" height="20" viewBox="0 0 20 20"><g class="ic"><path d="M18 3.8H9.7V8H7V5.5L2.4 10.3 7 15V12.6H9.7V17H18z" /></g></svg>
<svg class="si" style="left:509.08px;top:309.4px" width="20" height="20" viewBox="0 0 20 20"><g class="ic"><path d="M4.3 18H17.3V9.5H13V7H15.5L10.8 2.5 6 7H8.6V9.5H4.3z" /></g></svg>
<svg class="si" style="left:533.15px;top:309.4px" width="20" height="20" viewBox="0 0 20 20"><g class="ic"><path d="M7.6 3H13V7.8H15V5.5L19 10.3 15 15V12.8H13V17.8H7.6V12.8H5.6V15L1.8 10.3 5.6 5.5V7.8H7.6z" /></g></svg>
<svg class="si" style="left:557.22px;top:309.4px" width="20" height="20" viewBox="0 0 20 20"><g class="ic"><path d="M7.3 6.3H8.8V4.8H7.3L10.8 1.6 14.3 4.8H12.8V6.3H14.3V7.8H15.8V6.3L19 9.8 15.8 13.3V11.8H14.3V13.3H12.8V14.8H14.3L10.8 18 7.3 14.8H8.8V13.3H7.3V11.8H5.8V13.3L2.6 9.8 5.8 6.3V7.8H7.3z" /></g></svg>
<svg class="si" style="left:581.29px;top:309.4px" width="20" height="20" viewBox="0 0 20 20"><g class="ic"><path d="M3.3 16V8.2A5.5 5.5 0 0 1 14.3 8.2V10.5H18L13.3 15.6 8.6 10.5H12.1V8.2A3.3 3.3 0 0 0 5.5 8.2V16z" /></g></svg>
<svg class="si" style="left:292.45px;top:362.5px" width="20" height="20" viewBox="0 0 20 20"><g class="ic"><path d="M8.6 3.5h2.8a.6.6 0 0 1 .6.6V8h3.9a.6.6 0 0 1 .6.6v2.8a.6.6 0 0 1-.6.6H12v3.9a.6.6 0 0 1-.6.6H8.6a.6.6 0 0 1-.6-.600V12H4.1a.6.6 0 0 1-.6-.600V8.6a.6.6 0 0 1 .6-.600H8V4.1a.6.6 0 0 1 .6-.600z" /></g></svg>
<svg class="si" style="left:316.52px;top:362.5px" width="20" height="20" viewBox="0 0 20 20"><g class="ic"><rect x="2.8" y="7.9" width="14.4" height="4.2" rx="1.2"/></g></svg>
<svg class="si" style="left:340.59px;top:362.5px" width="20" height="20" viewBox="0 0 20 20"><g class="ic"><path d="M10 7.8L13.3 4.5 15.5 6.7 12.2 10 15.5 13.3 13.3 15.5 10 12.2 6.7 15.5 4.5 13.3 7.8 10 4.5 6.7 6.7 4.5z" stroke-width="1.3"/></g></svg>
<svg class="si" style="left:364.66px;top:362.5px" width="20" height="20" viewBox="0 0 20 20"><g class="ic"><rect x="3.5" y="7.9" width="13.4" height="4.2" rx="1.2"/><circle cx="10.2" cy="5" r="1.3" fill="#666"/><circle cx="10.2" cy="15" r="1.3" fill="#666"/></g></svg>
<svg class="si" style="left:388.73px;top:362.5px" width="20" height="20" viewBox="0 0 20 20"><g class="ic"><rect x="3.2" y="5.2" width="13.8" height="3.6" rx=".8"/><rect x="3.2" y="11" width="13.8" height="3.6" rx=".8"/><path d="M3.2 6.5h13.8M3.2 12.3h13.8" stroke-width=".6"/></g></svg>
<svg class="si" style="left:412.8px;top:362.5px" width="20" height="20" viewBox="0 0 20 20"><g class="ic"><rect x="3.4" y="5.6" width="13.8" height="3.4" rx=".6"/><rect x="3.4" y="11.4" width="13.8" height="3.4" rx=".6"/><path d="M3.6 17.3L15.3 3.2 17.3 4.3 5.5 17.6z" fill="#fff"/></g></svg>
<svg class="si" style="left:292.45px;top:416.3px" width="20" height="20" viewBox="0 0 20 20"><g class="ic"><path d="M2.3 4.3h15.7v12h-15.7z" stroke-width="1.2"/></g></svg>
<svg class="si" style="left:316.52px;top:416.3px" width="20" height="20" viewBox="0 0 20 20"><g class="ic"><rect x="2.3" y="4.3" width="15.7" height="11.7" rx="4" stroke-width="1.2"/></g></svg>
<svg class="si" style="left:340.59px;top:416.3px" width="20" height="20" viewBox="0 0 20 20"><g class="ic"><path d="M10.5 5.2L17.4 9.5 10.5 13.8 3.7 9.5z" /></g></svg>
<svg class="si" style="left:364.66px;top:416.3px" width="20" height="20" viewBox="0 0 20 20"><g class="ic"><path d="M7 4.2H17.5L13 15.8H2.6z" /></g></svg>
<svg class="si" style="left:388.73px;top:416.3px" width="20" height="20" viewBox="0 0 20 20"><g class="ic"><path d="M2.3 4.2H18V15.8H2.3zM4.8 4.2V15.8M15.6 4.2V15.8" /></g></svg>
<svg class="si" style="left:412.8px;top:416.3px" width="20" height="20" viewBox="0 0 20 20"><g class="ic"><path d="M3.4 3.3H16.8V16.8H3.4zM6 3.3V16.8M3.4 5.8H16.8" /></g></svg>
<svg class="si" style="left:436.87px;top:416.3px" width="20" height="20" viewBox="0 0 20 20"><g class="ic"><path d="M2.3 4.2H18V13.5C13 14 11 16.5 7.5 16.8 5 17 2.3 15.5 2.3 14z" /></g></svg>
<svg class="si" style="left:460.94px;top:416.3px" width="20" height="20" viewBox="0 0 20 20"><g class="ic"><path d="M2 8H13.5V14.8C10 15.2 8.5 17.5 5.5 17.5 3.5 17.5 2 16.5 2 15z" fill="#fff"/><path d="M4 8V6H15.5V13.3L13.5 14M6 6V4H17.5V11.6L15.5 12.3" stroke-width="1"/></g></svg>
<svg class="si" style="left:485.01px;top:416.3px" width="20" height="20" viewBox="0 0 20 20"><g class="ic"><rect x="2.5" y="5.9" width="15.5" height="8.2" rx="4.1"/></g></svg>
<svg class="si" style="left:509.08px;top:416.3px" width="20" height="20" viewBox="0 0 20 20"><g class="ic"><path d="M2.7 9.6L6.5 4.2H14.2L18 9.6 14.2 15.2H6.5z" /></g></svg>
<svg class="si" style="left:533.15px;top:416.3px" width="20" height="20" viewBox="0 0 20 20"><g class="ic"><path d="M2.5 9L18.3 4.8V16H2.5z" /></g></svg>
<svg class="si" style="left:557.22px;top:416.3px" width="20" height="20" viewBox="0 0 20 20"><g class="ic"><path d="M2.7 4.2H17.7L14.5 15.7H6z" /></g></svg>
<svg class="si" style="left:581.29px;top:416.3px" width="20" height="20" viewBox="0 0 20 20"><g class="ic"><circle cx="10.5" cy="10.2" r="6.2"/></g></svg>
<svg class="si" style="left:605.36px;top:416.3px" width="20" height="20" viewBox="0 0 20 20"><g class="ic"><path d="M5.2 4.2H16.4V10L10.8 14.6 5.2 10z" /></g></svg>
<svg class="si" style="left:292.45px;top:440.4px" width="20" height="20" viewBox="0 0 20 20"><g class="ic"><path d="M6 4H18V16.2H2V8.2z" /></g></svg>
<svg class="si" style="left:316.52px;top:440.4px" width="20" height="20" viewBox="0 0 20 20"><g class="ic"><path d="M2 5C5 7.5 7.5 7.5 10 6 12.5 4.5 15 4 18 5.5V14.5C15 13 12.5 13.5 10 15 7.5 16.5 5 16.5 2 14z" /></g></svg>
<svg class="si" style="left:340.59px;top:440.4px" width="20" height="20" viewBox="0 0 20 20"><g class="ic"><circle cx="10" cy="10" r="6.5"/><path d="M5.4 5.4l9.2 9.2M14.6 5.4l-9.2 9.2" /></g></svg>
<svg class="si" style="left:364.66px;top:440.4px" width="20" height="20" viewBox="0 0 20 20"><g class="ic"><circle cx="10" cy="9.4" r="7"/><path d="M10 2.4v14M3 9.4h14" /></g></svg>
<svg class="si" style="left:388.73px;top:440.4px" width="20" height="20" viewBox="0 0 20 20"><g class="ic"><path d="M4 3.5H16L4 16.5H16z" /></g></svg>
<svg class="si" style="left:412.8px;top:440.4px" width="20" height="20" viewBox="0 0 20 20"><g class="ic"><path d="M10 3.8L16.5 10 10 16.5 3.5 10zM3.5 10h13" /></g></svg>
<svg class="si" style="left:436.87px;top:440.4px" width="20" height="20" viewBox="0 0 20 20"><g class="ic"><path d="M10 3.5L17 16H3z" /></g></svg>
<svg class="si" style="left:460.94px;top:440.4px" width="20" height="20" viewBox="0 0 20 20"><g class="ic"><path d="M3 4H17L10 16.5z" /></g></svg>
<svg class="si" style="left:485.01px;top:440.4px" width="20" height="20" viewBox="0 0 20 20"><g class="ic"><path d="M5 4H18C16 6 16 14 18 16H5C2 14 2 6 5 4z" /></g></svg>
<svg class="si" style="left:509.08px;top:440.4px" width="20" height="20" viewBox="0 0 20 20"><g class="ic"><path d="M3 3.5H11.5A6.5 6.5 0 0 1 11.5 16.5H3z" /></g></svg>
<svg class="si" style="left:533.15px;top:440.4px" width="20" height="20" viewBox="0 0 20 20"><g class="ic"><circle cx="10.5" cy="10" r="6.8"/><path d="M12 16.6H17.8V14.5" stroke-width="1.3"/></g></svg>
<svg class="si" style="left:557.22px;top:440.4px" width="20" height="20" viewBox="0 0 20 20"><g class="ic"><path d="M2.5 6v9c0 1.2 3.5 2.2 7.7 2.2s7.8-1 7.8-2.2V6" /><ellipse cx="10.2" cy="6" rx="7.7" ry="2.7"/></g></svg>
<svg class="si" style="left:581.29px;top:440.4px" width="20" height="20" viewBox="0 0 20 20"><g class="ic"><path d="M6 2.5h9c1.2 0 2.2 3.3 2.2 7.5s-1 7.5-2.2 7.5H6C4.8 17.5 3.5 14.2 3.5 10S4.8 2.5 6 2.5z" /><path d="M15 2.5C13.5 2.5 12.5 5.8 12.5 10s1 7.5 2.5 7.5" /></g></svg>
<svg class="si" style="left:605.36px;top:440.4px" width="20" height="20" viewBox="0 0 20 20"><g class="ic"><path d="M7.5 2.5H14.5C17 4 18.2 7 18.2 9.7S17 15.5 14.5 17H7.5L3.8 9.7z" /></g></svg>
<svg class="si" style="left:292.45px;top:493.2px" width="20" height="20" viewBox="0 0 20 20"><g class="ic"><path d="M12.06 3.35L11.94 7.62L14.86 6.52L13 9.22L17.99 9.89L13.48 11.18L15.4 13.68L12.09 12.63L12.89 17.3L10.37 13.5L8.65 16.1L8.46 12.98L4.14 15.21L7.4 11.38L4.01 10.62L6.92 9.42L3.83 6.16L8.31 7.97L7.91 4.33L10.03 7.1z" stroke-width="1.25"/></g></svg>
<svg class="si" style="left:316.52px;top:493.2px" width="20" height="20" viewBox="0 0 20 20"><g class="ic"><path d="M14.4 3.47L13.17 7.52L15.89 6.93L14 9.2L18.57 9.74L14.55 11.07L16.66 13.07L13.52 12.74L15.21 16.29L12.11 14.01L11.68 16.67L10.25 14.2L8.17 18.08L8.3 14.04L5.83 15.16L7.1 12.48L2.62 13L6.41 10.72L3.69 9.31L6.9 8.91L4.32 5.83L7.74 7.15L7.61 4.53L9.62 6.58L10.72 2.41L11.51 6.56z" stroke-width="1.25"/></g></svg>
<svg class="si" style="left:340.59px;top:493.2px" width="20" height="20" viewBox="0 0 20 20"><g class="ic"><path d="M10.3 2.9L11.71 8.29L17.1 9.7L11.71 11.11L10.3 16.5L8.89 11.11L3.5 9.7L8.89 8.29z" /></g></svg>
<svg class="si" style="left:364.66px;top:493.2px" width="20" height="20" viewBox="0 0 20 20"><g class="ic"><path d="M10.5 3.1L12.38 8.11L17.73 8.35L13.54 11.69L14.97 16.85L10.5 13.9L6.03 16.85L7.46 11.69L3.27 8.35L8.62 8.11z" /></g></svg>
<svg class="si" style="left:388.73px;top:493.2px" width="20" height="20" viewBox="0 0 20 20"><g class="ic"><path d="M10.3 2.3L12.45 5.98L16.71 6L14.6 9.7L16.71 13.4L12.45 13.42L10.3 17.1L8.15 13.42L3.89 13.4L6 9.7L3.89 6L8.15 5.98z" /></g></svg>
<svg class="si" style="left:412.8px;top:493.2px" width="20" height="20" viewBox="0 0 20 20"><g class="ic"><path d="M10.3 2.8L12.3 5.86L15.93 5.51L14.78 8.98L17.32 11.6L13.9 12.87L13.42 16.49L10.3 14.6L7.18 16.49L6.7 12.87L3.28 11.6L5.82 8.98L4.67 5.51L8.3 5.86z" /></g></svg>
<svg class="si" style="left:436.87px;top:493.2px" width="20" height="20" viewBox="0 0 20 20"><g class="ic"><path d="M10.3 1.8L12.71 4.18L16.1 4.2L16.12 7.59L18.5 10L16.12 12.41L16.1 15.8L12.71 15.82L10.3 18.2L7.89 15.82L4.5 15.8L4.48 12.41L2.1 10L4.48 7.59L4.5 4.2L7.89 4.18z" /><text x="10.3" y="12.5" font-family="Liberation Sans, sans-serif" font-size="6.8" font-weight="bold" text-anchor="middle" fill="#303030" stroke="none">8</text></g></svg>
<svg class="si" style="left:460.94px;top:493.2px" width="20" height="20" viewBox="0 0 20 20"><g class="ic"><path d="M10.2 1.9L12.09 4.2L14.96 3.45L15.14 6.41L17.9 7.5L16.3 10L17.9 12.5L15.14 13.59L14.96 16.55L12.09 15.8L10.2 18.1L8.31 15.8L5.44 16.55L5.26 13.59L2.5 12.5L4.1 10L2.5 7.5L5.26 6.41L5.44 3.45L8.31 4.2z" /><text x="10.2" y="12.5" font-family="Liberation Sans, sans-serif" font-size="6.8" font-weight="bold" text-anchor="middle" fill="#303030" stroke="none">10</text></g></svg>
<svg class="si" style="left:485.01px;top:493.2px" width="20" height="20" viewBox="0 0 20 20"><g class="ic"><path d="M10.2 1.9L11.78 4.11L14.25 2.99L14.51 5.69L17.21 5.95L16.09 8.42L18.3 10L16.09 11.58L17.21 14.05L14.51 14.31L14.25 17.01L11.78 15.89L10.2 18.1L8.62 15.89L6.15 17.01L5.89 14.31L3.19 14.05L4.31 11.58L2.1 10L4.31 8.42L3.19 5.95L5.89 5.69L6.15 2.99L8.62 4.11z" /><text x="10.2" y="12.5" font-family="Liberation Sans, sans-serif" font-size="6.8" font-weight="bold" text-anchor="middle" fill="#303030" stroke="none">12</text></g></svg>
<svg class="si" style="left:509.08px;top:493.2px" width="20" height="20" viewBox="0 0 20 20"><g class="ic"><path d="M10.2 1.9L11.43 3.82L13.3 2.52L13.7 4.76L15.93 4.27L15.44 6.5L17.68 6.9L16.38 8.77L18.3 10L16.38 11.23L17.68 13.1L15.44 13.5L15.93 15.73L13.7 15.24L13.3 17.48L11.43 16.18L10.2 18.1L8.97 16.18L7.1 17.48L6.7 15.24L4.47 15.73L4.96 13.5L2.72 13.1L4.02 11.23L2.1 10L4.02 8.77L2.72 6.9L4.96 6.5L4.47 4.27L6.7 4.76L7.1 2.52L8.97 3.82z" stroke-width="1.05"/><text x="10.2" y="12.5" font-family="Liberation Sans, sans-serif" font-size="6.8" font-weight="bold" text-anchor="middle" fill="#303030" stroke="none">16</text></g></svg>
<svg class="si" style="left:533.15px;top:493.2px" width="20" height="20" viewBox="0 0 20 20"><g class="ic"><path d="M10.2 1.9L11.33 3.6L12.97 2.39L13.45 4.37L15.41 3.8L15.18 5.82L17.21 5.95L16.31 7.78L18.18 8.59L16.7 10L18.18 11.41L16.31 12.22L17.21 14.05L15.18 14.18L15.41 16.2L13.45 15.63L12.97 17.61L11.33 16.4L10.2 18.1L9.07 16.4L7.43 17.61L6.95 15.63L4.99 16.2L5.22 14.18L3.19 14.05L4.09 12.22L2.22 11.41L3.7 10L2.22 8.59L4.09 7.78L3.19 5.95L5.22 5.82L4.99 3.8L6.95 4.37L7.43 2.39L9.07 3.6z" stroke-width="1"/><text x="10.2" y="12.5" font-family="Liberation Sans, sans-serif" font-size="6.8" font-weight="bold" text-anchor="middle" fill="#303030" stroke="none">24</text></g></svg>
<svg class="si" style="left:557.22px;top:493.2px" width="20" height="20" viewBox="0 0 20 20"><g class="ic"><path d="M11.47 2L12.24 3.72L13.88 2.78L14.08 4.66L15.93 4.27L15.54 6.12L17.42 6.32L16.48 7.96L18.2 8.73L16.8 10L18.2 11.27L16.48 12.04L17.42 13.68L15.54 13.88L15.93 15.73L14.08 15.34L13.88 17.22L12.24 16.28L11.47 18L10.2 16.6L8.93 18L8.16 16.28L6.52 17.22L6.32 15.34L4.47 15.73L4.86 13.88L2.98 13.68L3.92 12.04L2.2 11.27L3.6 10L2.2 8.73L3.92 7.96L2.98 6.32L4.86 6.12L4.47 4.27L6.32 4.66L6.52 2.78L8.16 3.72L8.93 2L10.2 3.4z" stroke-width="1"/><text x="10.2" y="12.5" font-family="Liberation Sans, sans-serif" font-size="6.8" font-weight="bold" text-anchor="middle" fill="#303030" stroke="none">32</text></g></svg>
<svg class="si" style="left:581.29px;top:493.2px" width="20" height="20" viewBox="0 0 20 20"><g class="ic"><path d="M6.5 5.5h7.5v7h-7.5zM6.5 8H2l2 3.7L2 15.5h6.5V12.5M14 8h4.5l-2 3.7 2 3.8H12V12.5M6.5 12.5l2 3M14 12.5l-2 3" /></g></svg>
<svg class="si" style="left:605.36px;top:493.2px" width="20" height="20" viewBox="0 0 20 20"><g class="ic"><path d="M6.5 14.5h7.5v-7h-7.5zM6.5 12H2l2-3.7L2 4.5h6.5V7.5M14 12h4.5l-2-3.7 2-3.8H12V7.5M6.5 7.5l2-3M14 7.5l-2-3" /></g></svg>
<svg class="si" style="left:292.45px;top:517.5px" width="20" height="20" viewBox="0 0 20 20"><g class="ic"><path d="M6.5 13V8.5c0-2 1.2-3.3 3.7-3.3s3.8 1.3 3.8 3.3V13M6.5 8H1.5l2 3.6-2 3.7h6.5l.500-2.3M14 8h5l-2 3.6 2 3.7H12.5L12 13M6.5 13c2-1 5.5-1 7.5 0M8 15.3c1.3-.8 3.3-.8 4.5 0" /></g></svg>
<svg class="si" style="left:316.52px;top:517.5px" width="20" height="20" viewBox="0 0 20 20"><g class="ic"><path d="M6.5 7V11.5c0 2 1.2 3.3 3.7 3.3s3.8-1.3 3.8-3.3V7M6.5 12H1.5l2-3.6-2-3.7h6.5l.500 2.3M14 12h5l-2-3.6 2-3.7H12.5L12 7M6.5 7c2 1 5.5 1 7.5 0M8 4.7c1.3.8 3.3.8 4.5 0" /></g></svg>
<svg class="si" style="left:340.59px;top:517.5px" width="20" height="20" viewBox="0 0 20 20"><g class="ic"><path d="M6.5 15.5V4A1.7 1.7 0 0 1 8.2 2.3h8.3A1.6 1.6 0 0 1 16.5 5.5H15V16A1.7 1.7 0 0 1 13.3 17.7H5A1.6 1.6 0 0 1 5 14.5h1.5M8.2 2.3A1.6 1.6 0 0 1 8.2 5.5H15M5 17.7A1.6 1.6 0 0 0 6.5 15.5" /></g></svg>
<svg class="si" style="left:364.66px;top:517.5px" width="20" height="20" viewBox="0 0 20 20"><g class="ic"><path d="M5.5 6.5H15V5.2A1.6 1.6 0 0 1 18.2 5.2V14.5A1.7 1.7 0 0 1 16.5 16.2H5.5V17A1.6 1.6 0 0 1 2.3 17V8A1.6 1.6 0 0 1 5.5 8zM15 6.5A1.6 1.6 0 0 0 18.2 5.2M5.5 8V16.2" /></g></svg>
<svg class="si" style="left:388.73px;top:517.5px" width="20" height="20" viewBox="0 0 20 20"><g class="ic"><path d="M2.5 5.5C5.5 3.5 8 4.5 10.2 5.5S15 7 17.8 5V14C15 16 12.5 15.2 10.2 14.2S5.5 12.5 2.5 14.5z" /></g></svg>
<svg class="si" style="left:412.8px;top:517.5px" width="20" height="20" viewBox="0 0 20 20"><g class="ic"><path d="M2.5 5.5C4 4 5.5 4 6.5 5S9 6 10.4 5 13 4 14.2 5 17 5.5 18.2 5V15.5C17 17 15.5 17 14.2 16S11.5 15 10.4 16 7.5 17 6.5 16 4 15 2.5 16z" /></g></svg>
<svg class="si" style="left:292.45px;top:570.2px" width="20" height="20" viewBox="0 0 20 20"><g class="ic"><path d="M2.8 3.7H17V14.4H9.8L7.3 16.8 5.2 14.4H2.8z" stroke-width="1.2"/></g></svg>
<svg class="si" style="left:316.52px;top:570.2px" width="20" height="20" viewBox="0 0 20 20"><g class="ic"><path d="M5 3.7H14.8A2.2 2.2 0 0 1 17 5.9V12.2A2.2 2.2 0 0 1 14.8 14.4H12L10 16.8 8 14.4H5A2.2 2.2 0 0 1 2.8 12.2V5.9A2.2 2.2 0 0 1 5 3.7z" stroke-width="1.2"/></g></svg>
<svg class="si" style="left:340.59px;top:570.2px" width="20" height="20" viewBox="0 0 20 20"><g class="ic"><path d="M8.5 14.5C5 14 3 12 3 9.3 3 6.2 6.2 3.7 10.5 3.7S18 6.2 18 9.3 14.8 14.8 10.8 14.8L8 16.8z" stroke-width="1.2"/></g></svg>
<svg class="si" style="left:364.66px;top:570.2px" width="20" height="20" viewBox="0 0 20 20"><g class="ic"><path d="M6.5 12.8A2.6 2.6 0 0 1 4.2 9.2 2.6 2.6 0 0 1 5.8 5.2 3 3 0 0 1 10.5 3.4 2.8 2.8 0 0 1 15 4.8 2.6 2.6 0 0 1 16.8 8.6 2.5 2.5 0 0 1 14.8 12.4 2.4 2.4 0 0 1 11 12.6 2.6 2.6 0 0 1 6.5 12.8z" stroke-width="1.2"/><circle cx="5.8" cy="15.6" r="1" fill="#444" stroke="none"/><circle cx="3.8" cy="17.6" r=".8" fill="#444" stroke="none"/></g></svg>
<svg class="si" style="left:388.73px;top:570.2px" width="20" height="20" viewBox="0 0 20 20"><g class="ic"><rect x="8.4" y="5.5" width="9.5" height="9" stroke-width="1.2" /><path d="M8.4 9.8L2.8 15.5" stroke-width="1.2"/></g></svg>
<svg class="si" style="left:412.8px;top:570.2px" width="20" height="20" viewBox="0 0 20 20"><g class="ic"><rect x="9.3" y="5.5" width="9.5" height="9" stroke-width="1.2" /><path d="M9.3 9.8H5.2L2 15.5" stroke-width="1.2"/></g></svg>
<svg class="si" style="left:436.87px;top:570.2px" width="20" height="20" viewBox="0 0 20 20"><g class="ic"><rect x="8.4" y="5.5" width="9.5" height="9" stroke-width="1.2" /><path d="M8.4 9.8L3.4 10.3V13.8L7 17" stroke-width="1.2"/></g></svg>
<svg class="si" style="left:460.94px;top:570.2px" width="20" height="20" viewBox="0 0 20 20"><g class="ic"><rect x="9.8" y="5.5" width="8.7" height="9" stroke-width="1.2" stroke-dasharray="1.5 1.2"/><path d="M8.4 5.2V14.8M8.4 9L2.8 15.5" stroke-width="1.2"/></g></svg>
<svg class="si" style="left:485.01px;top:570.2px" width="20" height="20" viewBox="0 0 20 20"><g class="ic"><rect x="10.2" y="5.5" width="8.5" height="9" stroke-width="1.2" stroke-dasharray="1.5 1.2"/><path d="M8.7 5.2V14.8M8.7 9.5H5.2L2.3 15.5" stroke-width="1.2"/></g></svg>
<svg class="si" style="left:509.08px;top:570.2px" width="20" height="20" viewBox="0 0 20 20"><g class="ic"><rect x="10.2" y="5" width="8.5" height="9" stroke-width="1.2" stroke-dasharray="1.5 1.2"/><path d="M8.7 4.7V14.3M8.7 9L3.5 9.5V13.5L7.5 16.8" stroke-width="1.2"/></g></svg>
<svg class="si" style="left:533.15px;top:570.2px" width="20" height="20" viewBox="0 0 20 20"><g class="ic"><rect x="8.8" y="5.5" width="9.6" height="9" stroke-width="1.2" stroke-dasharray="1.5 1.2"/><path d="M8.8 9.2L3.2 15.5" stroke-width="1.2"/></g></svg>
<svg class="si" style="left:557.22px;top:570.2px" width="20" height="20" viewBox="0 0 20 20"><g class="ic"><rect x="9.3" y="5.5" width="9.5" height="9" stroke-width="1.2" stroke-dasharray="1.5 1.2"/><path d="M9.3 9.5H5.5L2.5 15.5" stroke-width="1.2"/></g></svg>
<svg class="si" style="left:581.29px;top:570.2px" width="20" height="20" viewBox="0 0 20 20"><g class="ic"><rect x="9.2" y="5" width="9.5" height="9" stroke-width="1.2" stroke-dasharray="1.5 1.2"/><path d="M9.2 9L3.7 9.6V13.5L7.5 16.8" stroke-width="1.2"/></g></svg>
<svg class="si" style="left:605.36px;top:570.2px" width="20" height="20" viewBox="0 0 20 20"><g class="ic"><rect x="10.8" y="5.5" width="7.8" height="9" stroke-width="1.3" /><path d="M8.6 5.2V14.8M8.6 9L3 15.5" stroke-width="1.2"/></g></svg>
<svg class="si" style="left:292.45px;top:594.2px" width="20" height="20" viewBox="0 0 20 20"><g class="ic"><rect x="10" y="5.5" width="8" height="9" stroke-width="1.4" /><path d="M8.2 5.2V14.8" stroke-width="1.6"/><path d="M8.2 9.5H4.5L1.8 15.2" stroke-width="1.2"/></g></svg>
<svg class="si" style="left:316.52px;top:594.2px" width="20" height="20" viewBox="0 0 20 20"><g class="ic"><rect x="9.5" y="5.5" width="8.5" height="9" stroke-width="1.4" /><path d="M7.8 5.2V14.8" stroke-width="1.6"/><path d="M7.8 9.3L3 9.9V13.5L7 17" stroke-width="1.2"/></g></svg>
<svg class="si" style="left:292.45px;top:647.9px" width="20" height="20" viewBox="0 0 20 20"><g class="ic"><rect x="2.2" y="2.2" width="15.8" height="15.6" stroke-width="1.5" style="stroke:#808080"/><path d="M13.6 5.3V14.7L6 10z" /></g></svg>
<svg class="si" style="left:316.52px;top:647.9px" width="20" height="20" viewBox="0 0 20 20"><g class="ic"><rect x="2.2" y="2.2" width="15.8" height="15.6" stroke-width="1.8" style="stroke:#5a5a5a"/><path d="M6.8 5.3V14.7L14.4 10z" stroke-width="1.3"/></g></svg>
<svg class="si" style="left:340.59px;top:647.9px" width="20" height="20" viewBox="0 0 20 20"><g class="ic"><rect x="2.2" y="2.2" width="15.8" height="15.6" stroke-width="1.5" style="stroke:#808080"/><path d="M14 5.3V14.7L8 10zM6 5.3V14.7" /></g></svg>
<svg class="si" style="left:364.66px;top:647.9px" width="20" height="20" viewBox="0 0 20 20"><g class="ic"><rect x="2.2" y="2.2" width="15.8" height="15.6" stroke-width="1.5" style="stroke:#808080"/><path d="M6 5.3V14.7L12 10zM14 5.3V14.7" /></g></svg>
<svg class="si" style="left:388.73px;top:647.9px" width="20" height="20" viewBox="0 0 20 20"><g class="ic"><rect x="2.2" y="2.2" width="15.8" height="15.6" stroke-width="1.5" style="stroke:#808080"/><path d="M5.5 14.5V10.5L10 6l4.5 4.5V14.5zM4.5 10.5L10 5l2.5 2.5V5h1.5V9l1 1M8.8 14.5V12h2.4v2.5" stroke-width="1.1"/></g></svg>
<svg class="si" style="left:412.8px;top:647.9px" width="20" height="20" viewBox="0 0 20 20"><g class="ic"><rect x="2.2" y="2.2" width="15.8" height="15.6" stroke-width="1.5" style="stroke:#808080"/><circle cx="10" cy="10" r="5.7"/><circle cx="10" cy="7.6" r=".9" fill="#444" stroke="none"/><path d="M9 9.5h1.5v3M8.8 12.7h2.6" stroke-width="1.2"/></g></svg>
<svg class="si" style="left:436.87px;top:647.9px" width="20" height="20" viewBox="0 0 20 20"><g class="ic"><rect x="2.2" y="2.2" width="15.8" height="15.6" stroke-width="1.5" style="stroke:#808080"/><path d="M5.5 9.5v1.5a3.5 3.5 0 0 0 7 0V8.5H14.5L11.5 5 8.5 8.5h2V11a1.5 1.5 0 0 1-3 0V9.5z" stroke-width="1"/></g></svg>
<svg class="si" style="left:460.94px;top:647.9px" width="20" height="20" viewBox="0 0 20 20"><g class="ic"><rect x="2.2" y="2.2" width="15.8" height="15.6" stroke-width="1.5" style="stroke:#808080"/><path d="M5 8.2H12.5V12.5H6.5V10H5zM12.5 9.5L15 8.5V12.2L12.5 11.2M6.5 10H11" stroke-width="1.1"/></g></svg>
<svg class="si" style="left:485.01px;top:647.9px" width="20" height="20" viewBox="0 0 20 20"><g class="ic"><rect x="2.2" y="2.2" width="15.8" height="15.6" stroke-width="1.5" style="stroke:#808080"/><path d="M6.5 5.5H11.2L14 8.3V14.5H6.5zM11.2 5.5V8.3H14" stroke-width="1.2"/></g></svg>
<svg class="si" style="left:509.08px;top:647.9px" width="20" height="20" viewBox="0 0 20 20"><g class="ic"><rect x="2.2" y="2.2" width="15.8" height="15.6" stroke-width="1.5" style="stroke:#808080"/><path d="M5.5 8.5H8L11.5 5.5V14.5L8 11.5H5.5zM13.5 10h1.5M13.2 7.2l1.3-1M13.2 12.8l1.3 1" stroke-width="1.1"/></g></svg>
<svg class="si" style="left:533.15px;top:647.9px" width="20" height="20" viewBox="0 0 20 20"><g class="ic"><rect x="2.2" y="2.2" width="15.8" height="15.6" stroke-width="1.5" style="stroke:#808080"/><text x="10.2" y="14.3" font-family="Liberation Sans, sans-serif" font-size="12" font-weight="bold" text-anchor="middle" fill="#303030" stroke="none">?</text></g></svg>
<svg class="si" style="left:557.22px;top:647.9px" width="20" height="20" viewBox="0 0 20 20"><g class="ic"><rect x="2.2" y="2.2" width="15.8" height="15.6" stroke-width="1.5" style="stroke:#808080"/></g></svg>
<svg class="si" style="left:292.45px;top:701.7px" width="20" height="20" viewBox="0 0 20 20"><g class="ic"><path d="M2.2 4.3H18V15.8H2.2z" stroke-width="1.2"/></g></svg>
<svg class="si" style="left:316.52px;top:701.7px" width="20" height="20" viewBox="0 0 20 20"><g class="ic"><rect x="2.2" y="4.3" width="15.8" height="11.5" rx="2.5" stroke-width="1.2"/></g></svg>
<svg class="si" style="left:340.59px;top:701.7px" width="20" height="20" viewBox="0 0 20 20"><g class="ic"><path d="M2.2 4.3H14.2L18 8V15.8H2.2z" stroke-width="1.2"/></g></svg>
<svg class="si" style="left:364.66px;top:701.7px" width="20" height="20" viewBox="0 0 20 20"><g class="ic"><path d="M6 4.3H14.2L18 8V15.8H2.2V8z" stroke-width="1.2"/></g></svg>
<svg class="si" style="left:388.73px;top:701.7px" width="20" height="20" viewBox="0 0 20 20"><g class="ic"><path d="M2.2 4.3H14.2L18 8V15.8H6L2.2 12z" stroke-width="1.2"/></g></svg>
<svg class="si" style="left:412.8px;top:701.7px" width="20" height="20" viewBox="0 0 20 20"><g class="ic"><path d="M4.5 4.3H14.2L18 8V15.8H2.2V6.6A2.3 2.3 0 0 1 4.5 4.3z" stroke-width="1.2"/></g></svg>
<svg class="si" style="left:436.87px;top:701.7px" width="20" height="20" viewBox="0 0 20 20"><g class="ic"><path d="M2.2 4.3H16A2 2 0 0 1 18 6.3V15.8H2.2z" stroke-width="1.2"/></g></svg>
<svg class="si" style="left:460.94px;top:701.7px" width="20" height="20" viewBox="0 0 20 20"><g class="ic"><path d="M4 4.3H16.2A1.8 1.8 0 0 1 18 6.1V15.8H2.2V6.1A1.8 1.8 0 0 1 4 4.3z" stroke-width="1.2"/></g></svg>
<svg class="si" style="left:485.01px;top:701.7px" width="20" height="20" viewBox="0 0 20 20"><g class="ic"><path d="M4 4.3H18V14A1.8 1.8 0 0 1 16.2 15.8H2.2V6.1A1.8 1.8 0 0 1 4 4.3z" stroke-width="1.2"/></g></svg>
<svg class="si" style="left:292.45px;top:754.6px" width="20" height="20" viewBox="0 0 20 20"><g class="ic"><path d="M2.8 3.1L17 16.9" stroke-width="1.2"/></g></svg>
<svg class="si" style="left:316.52px;top:754.6px" width="20" height="20" viewBox="0 0 20 20"><g class="ic"><path d="M2.8 3.1L17 16.9M12.8 16.9H17V12.7" stroke-width="1.2"/></g></svg>
<svg class="si" style="left:340.59px;top:754.6px" width="20" height="20" viewBox="0 0 20 20"><g class="ic"><path d="M3.5 3.5L17.5 17M3.5 7.5V3.5H7.5M13.5 17H17.5V13" stroke-width="1.2"/></g></svg>
<svg class="si" style="left:364.66px;top:754.6px" width="20" height="20" viewBox="0 0 20 20"><g class="ic"><path d="M2.3 4.9H9.7V15.8H18" stroke-width="1.2"/></g></svg>
<svg class="si" style="left:388.73px;top:754.6px" width="20" height="20" viewBox="0 0 20 20"><g class="ic"><path d="M2.3 3.4H8.8V15H17.4M15.2 12.8L17.4 15 15.2 17.2" stroke-width="1.2"/></g></svg>
<svg class="si" style="left:412.8px;top:754.6px" width="20" height="20" viewBox="0 0 20 20"><g class="ic"><path d="M3 4.4H9.6V15.7H18M5 2.2L2.8 4.4 5 6.6M15.8 13.5L18 15.7 15.8 17.9" stroke-width="1.2"/></g></svg>
<svg class="si" style="left:436.87px;top:754.6px" width="20" height="20" viewBox="0 0 20 20"><g class="ic"><path d="M7 4.8H10.5C13.5 4.8 13.5 8.5 11 10.2 8.5 12 8.5 15.6 11.5 15.6H14" stroke-width="1.2"/></g></svg>
<svg class="si" style="left:460.94px;top:754.6px" width="20" height="20" viewBox="0 0 20 20"><g class="ic"><path d="M6 4.2H9C12 4.2 12.5 7.5 10 9.5 7.5 11.5 8 15.3 11 15.3H15.3M13.3 13.3L15.5 15.3 13.3 17.5" stroke-width="1.2"/></g></svg>
<svg class="si" style="left:485.01px;top:754.6px" width="20" height="20" viewBox="0 0 20 20"><g class="ic"><path d="M6.5 4H9.5C12.5 4 13 7.5 10.5 9.5 8 11.5 8.5 15.4 11.5 15.4H15.3M13.3 13.3L15.5 15.4 13.3 17.6M8.5 1.8L6.3 4 8.5 6.2" stroke-width="1.2"/></g></svg>
<svg class="si" style="left:509.08px;top:754.6px" width="20" height="20" viewBox="0 0 20 20"><g class="ic"><path d="M2.2 12C4 8 6 4.8 8 4.8 10.5 4.8 11 9 12 12 13 15 14.5 16 17.2 16" stroke-width="1.2"/></g></svg>
<svg class="si" style="left:533.15px;top:754.6px" width="20" height="20" viewBox="0 0 20 20"><g class="ic"><path d="M8.8 3.5C7.5 6 6 8.5 7 9.5 8 10.5 10.5 6 12.5 6.5 15 7.2 12.5 12 11.5 14S13.5 16 14.2 14.5 12.5 12.5 11.5 14 12 17 12.8 17.8" stroke-width="1.2"/></g></svg>
<svg class="si" style="left:557.22px;top:754.6px" width="20" height="20" viewBox="0 0 20 20"><g class="ic"><path d="M3 15.6V9.5L7.5 5.3H13.5C12.5 8 14 10 17.3 10V14.5A1.1 1.1 0 0 1 16.2 15.6z" stroke-width="1.3"/></g></svg>

<!-- tooltip -->
<div class="abs" style="left:341px;top:443px;width:174px;height:29px;background:#fff;border-radius:4px;box-shadow:0 2px 8px rgba(0,0,0,.20),0 0 1px rgba(0,0,0,.15)"></div>
<div class="sec" style="left:354px;top:451px;color:#5c5c5c;letter-spacing:-0.08px">Flowchart: Alternate process</div>
</body></html>
